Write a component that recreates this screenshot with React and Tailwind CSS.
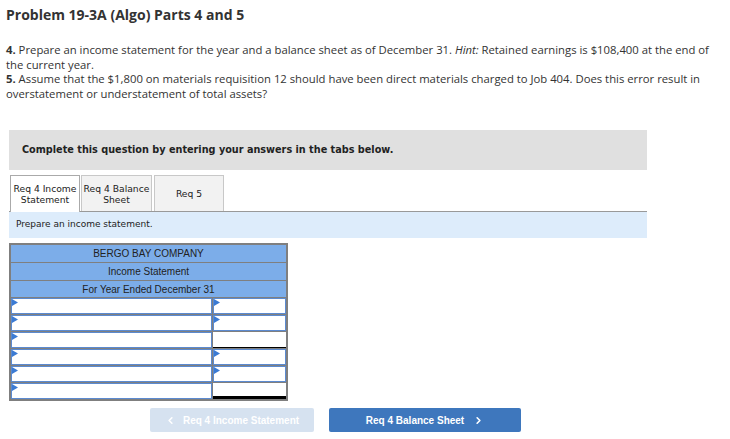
import React from 'react';
import { ChevronLeft, ChevronRight } from 'lucide-react';

const Flag = () => (
  <svg className="absolute left-0 top-0" width="6" height="7" viewBox="0 0 6 7">
    <path d="M0 0 L6 3.5 L0 7 Z" fill="#3b7bd4" />
  </svg>
);

const rows = [
  { input: true, total: false },
  { input: true, total: false },
  { input: false, total: 'single' },
  { input: true, total: false },
  { input: true, total: false },
  { input: false, total: 'double' },
];

const App = () => {
  return (
    <div className="w-[730px] h-[439px] bg-white text-[#222] overflow-hidden" style={{ fontFamily: '"Open Sans", Arial, sans-serif' }}>
      <div className="px-[6px] pt-[5px]">
        <h1 className="text-[14px] font-bold leading-[20px] text-[#333]">Problem 19-3A (Algo) Parts 4 and 5</h1>

        <div className="mt-[18px] text-[11.3px] leading-[14.5px] text-[#333]">
          <p>
            <b>4.</b> Prepare an income statement for the year and a balance sheet as of December 31. <i>Hint:</i> Retained earnings is $108,400 at the end of the current year.
          </p>
          <p>
            <b>5.</b> Assume that the $1,800 on materials requisition 12 should have been direct materials charged to Job 404. Does this error result in overstatement or understatement of total assets?
          </p>
        </div>
      </div>

      <div className="ml-[9px] w-[638px]" style={{ fontFamily: '"DejaVu Sans", Verdana, sans-serif' }}>
        <div className="mt-[29px] h-[40px] bg-[#e0e0e0] flex items-center pl-[13px] text-[9.7px] font-bold text-[#222]">
          Complete this question by entering your answers in the tabs below.
        </div>

        <div className="mt-[5px] flex items-end h-[37px] border-b border-[#999]">
          <div className="w-[70px] h-[37px] ml-[1px] bg-white border border-b-0 border-[#aaa] flex flex-col items-center justify-center text-[9.2px] leading-[11px] text-[#222] -mb-px">
            <span>Req 4 Income</span>
            <span>Statement</span>
          </div>
          <div className="w-[71px] h-[36px] ml-px bg-[#f2f2f2] border border-b-0 border-[#c8c8c8] flex flex-col items-center justify-center text-[9.2px] leading-[11px] text-[#222]">
            <span>Req 4 Balance</span>
            <span>Sheet</span>
          </div>
          <div className="w-[70px] h-[36px] ml-[2px] bg-[#f2f2f2] border border-b-0 border-[#c8c8c8] flex items-center justify-center text-[9.2px] text-[#222]">
            Req 5
          </div>
        </div>

        <div className="h-[26px] bg-[#ddecfb] flex items-center pl-[7px] text-[9px] text-[#222]">
          Prepare an income statement.
        </div>
      </div>

      <div className="ml-[9px] mt-[5px] w-[279px] border-2 border-[#7f7f7f]" style={{ fontFamily: '"Liberation Sans", Arial, sans-serif' }}>
        <div className="h-[18px] bg-[#7cade9] border-b border-[#7f7f7f] flex items-center justify-center text-[10px] text-[#222]">BERGO BAY COMPANY</div>
        <div className="h-[18px] bg-[#7cade9] border-b border-[#7f7f7f] flex items-center justify-center text-[10px] text-[#222]">Income Statement</div>
        <div className="h-[16px] bg-[#7cade9] flex items-center justify-center text-[10px] text-[#222]">For Year Ended December 31</div>
        {rows.map((r, i) => (
          <div key={i} className="flex h-[17px] border-t border-[#7f7f7f]">
            <div className="relative w-[201px] border border-[#5b8ad0] bg-white">
              <Flag />
            </div>
            <div className="w-px bg-[#7f7f7f]" />
            {r.input ? (
              <div className="relative flex-1 border border-[#5b8ad0] bg-white">
                <Flag />
              </div>
            ) : (
              <div className={`flex-1 bg-white border-black ${r.total === 'double' ? 'border-b-[3px]' : 'border-b'}`} />
            )}
          </div>
        ))}
      </div>

      <div className="flex mt-[7px] ml-[150px] gap-[15px]" style={{ fontFamily: '"Liberation Sans", Arial, sans-serif' }}>
        <button className="w-[164px] h-[24px] bg-[#d6e2f0] rounded-[2px] text-white text-[10px] font-bold flex items-center justify-center gap-[7px]">
          <ChevronLeft className="w-[11px] h-[11px]" strokeWidth={3.5} />
          <span>Req 4 Income Statement</span>
        </button>
        <button className="w-[192px] h-[24px] bg-[#3e77bd] rounded-[2px] text-white text-[10px] font-bold flex items-center justify-center gap-[9px]">
          <span>Req 4 Balance Sheet</span>
          <ChevronRight className="w-[11px] h-[11px]" strokeWidth={3.5} />
        </button>
      </div>
    </div>
  );
};

export default App;
